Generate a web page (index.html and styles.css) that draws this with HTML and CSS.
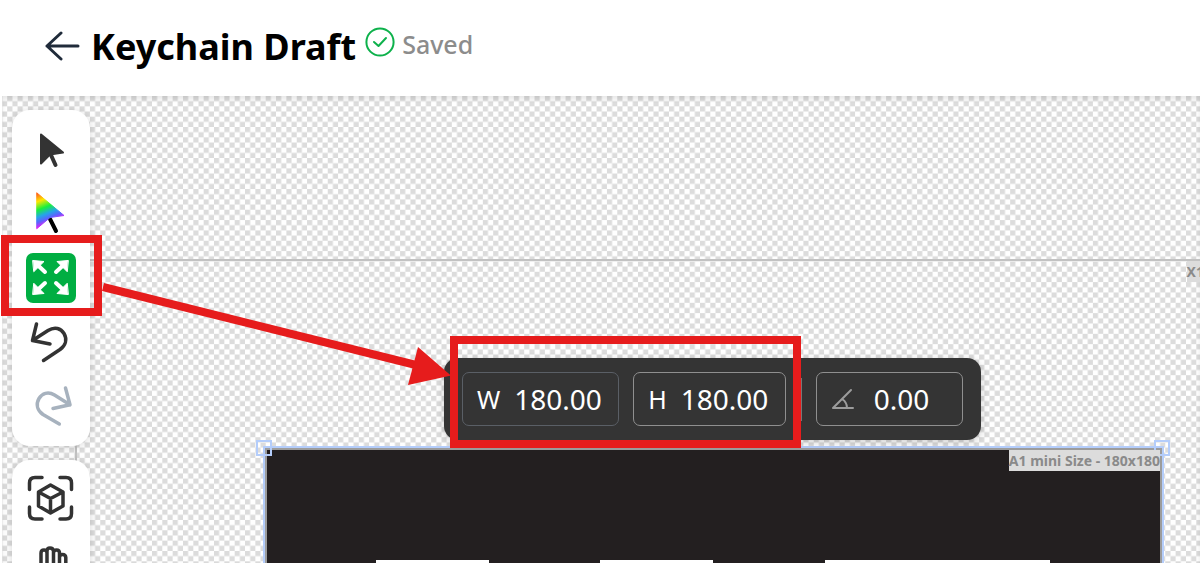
FILE: index.html
```html
<!DOCTYPE html>
<html lang="en">

<head>
	<meta charset="UTF-8">
	<meta name="viewport" content="width=device-width, initial-scale=1">
	<title>Keychain Draft</title>
	<link rel="stylesheet" href="styles.css">
</head>

<body>
	<header class="topbar">
		<a class="back" href="#" aria-label="Back">
			<svg width="36" height="32" viewBox="0 0 36 32"><path d="M33 15H2M16 2L2 15l14 13" /></svg>
		</a>
		<h1>Keychain Draft</h1>
		<div class="status">
			<svg width="30" height="30" viewBox="0 0 30 30"><circle cx="15" cy="15" r="13.6" /><path d="M9 15l4.500 4L21 11" /></svg>
			<span>Saved</span>
		</div>
	</header>

	<main class="workspace">
		<svg class="checker" width="100%" height="100%" aria-hidden="true">
			<defs>
				<pattern id="squares" width="2" height="2" patternUnits="userSpaceOnUse" patternTransform="translate(5.2 0) scale(5.17)">
					<path d="M0 0h1v1H0zM1 1h1v1H1z" fill="#dcdcdc" />
				</pattern>
			</defs>
			<rect width="100%" height="100%" fill="url(#squares)" />
		</svg>

		<!-- print areas -->
		<div class="plate"><span class="plate-label">X1</span></div>
		<div class="board">
			<i class="shape shape-a"></i>
			<i class="shape shape-b"></i>
			<i class="shape shape-c"></i>
			<i class="handle handle-left"></i>
			<i class="handle handle-right"></i>
			<span class="plate-label">A1 mini Size - 180x180</span>
		</div>

		<div class="tools">
			<nav class="tool-group" aria-label="Edit">
				<button type="button" aria-label="Select">
					<svg viewBox="0 0 50 50"><path class="solid" d="M15 9.500L37 27.500 24 29.500 15 38.500z" /><path class="thick" d="M24.500 29l5 11" /></svg>
				</button>
				<button type="button" aria-label="Select by color">
					<svg viewBox="0 0 50 50">
						<defs>
							<linearGradient id="rainbow" gradientUnits="userSpaceOnUse" x1="12" y1="5" x2="25" y2="37">
								<stop offset="0" stop-color="#ff6a1c" />
								<stop offset=".2" stop-color="#ffe600" />
								<stop offset=".43" stop-color="#18f03c" />
								<stop offset=".62" stop-color="#25a5e8" />
								<stop offset=".76" stop-color="#5b63ff" />
								<stop offset=".92" stop-color="#e51cf5" />
								<stop offset="1" stop-color="#ff22d8" />
							</linearGradient>
						</defs>
						<path d="M24 30l6 12" stroke="#000" stroke-width="4" />
						<path d="M11 4L38 26.500 24 28.500 11 39.500z" fill="url(#rainbow)" stroke="url(#rainbow)" stroke-width="1" />
					</svg>
				</button>
				<button type="button" class="active" aria-label="Resize">
					<svg viewBox="0 0 50 50">
						<g id="corner"><path d="M7 7.500l11 1L8 18.500z" fill="#fff" stroke="#fff" stroke-width="1" /><path d="M11 11.500l8 7.500" stroke="#fff" stroke-width="4" /></g>
						<use href="#corner" transform="matrix(-1 0 0 1 49 0)" />
						<use href="#corner" transform="matrix(1 0 0 -1 0 49)" />
						<use href="#corner" transform="matrix(-1 0 0 -1 49 49)" />
					</svg>
				</button>
				<button type="button" aria-label="Undo">
					<svg viewBox="0 0 50 50"><path d="M10.500 7L6.500 23.500 24 27M6.500 23.500L22 13.500C29 9 35 11.500 38 16.500c3.500 6 1.500 12-4 16L17.500 43.500" /></svg>
				</button>
				<button type="button" class="muted" aria-label="Redo">
					<svg viewBox="0 0 50 50"><path d="M39.500 7L44 23.800 27 27.500M44 23.800L28.500 14C22 10 16 12.500 13 17.500c-3.500 6-1.500 12 4 16l16.300 9.500" /></svg>
				</button>
			</nav>
			<nav class="tool-group" aria-label="View">
				<button type="button" aria-label="3D preview">
					<svg viewBox="0 0 50 50"><path d="M3.500 14.500V8q0-5.500 5.500-5.500h7M34 2.500h6q5.500 0 5.500 5.500v6.500M45.500 32v6.500q0 5.500-5.500 5.500h-6M16 44H9q-5.500 0-5.500-5.500V32" /><path d="M24.500 10L37 17v14l-12.500 7L12.500 31V17zM12.500 17l12 6.500L37 17M24.500 23.500v14" /></svg>
				</button>
				<button type="button" aria-label="Pan">
					<svg viewBox="0 0 50 50"><path d="M15 34V14q0-3 3-3t3 3v16M21 28V12q0-3 3-3t3.500 3v16M27.500 28V14q0-3 3-3t3 3v14M33.500 28V18.500q0-3 3-3t3.300 3V36" /></svg>
				</button>
			</nav>
		</div>

		<form class="props">
			<label class="field field-width"><span>W</span><input type="text" value="180.00"></label>
			<label class="field"><span>H</span><input type="text" value="180.00"></label>
			<i class="divider"></i>
			<label class="field field-angle" aria-label="Angle">
				<svg width="24" height="24" viewBox="0 0 24 24"><path d="M20 3L2 21h20M11 12q5 3 5 9" /></svg>
				<input type="text" value="0.00">
			</label>
		</form>
	</main>

	<!-- callouts -->
	<div class="callout callout-tool"></div>
	<div class="callout callout-size"></div>
	<svg class="callout-arrow" width="350" height="110" viewBox="0 0 350 110" aria-hidden="true">
		<path d="M3 7L320 86" stroke="#e61c1c" stroke-width="8" fill="none" />
		<path d="M318 67l33 28.500L308 105z" fill="#e61c1c" />
	</svg>
</body>

</html>
```

FILE: styles.css
```css
* {
	box-sizing: border-box;
}

body {
	margin: 0;
	height: 100vh;
	display: flex;
	flex-direction: column;
	position: relative;
	overflow: hidden;
	background: #fff;
	font-family: "Noto Sans", "Open Sans", sans-serif;
}

svg {
	display: block;
	fill: none;
	stroke-linecap: round;
	stroke-linejoin: round;
}

.topbar {
	flex: none;
	display: flex;
	align-items: center;
	height: 96px;
	padding: 0 45px 3px;
}

.back {
	margin-right: 10px;
}

.back svg {
	stroke: #202b3a;
	stroke-width: 3;
}

h1 {
	margin: 0;
	font-size: 36px;
	line-height: 48px;
	font-weight: 700;
	color: #000;
}

.status {
	display: flex;
	align-items: center;
	gap: 7px;
	margin-left: 9px;
	padding-bottom: 5px;
	font-size: 25px;
	line-height: 32px;
	font-weight: 500;
	color: #8c8c8c;
}

.status svg {
	margin-bottom: 4px;
	stroke: #0db14b;
	stroke-width: 2;
}

.workspace {
	flex: 1;
	min-height: 0;
	position: relative;
	overflow: hidden;
	margin-left: 2px;
	box-shadow: inset 0 3px 5px rgba(0, 0, 0, 0.1);
}

.checker {
	position: absolute;
	inset: 0;
	z-index: -1;
}

.plate {
	position: absolute;
	left: 73px;
	top: 163px;
	right: -6px;
	bottom: -8px;
	border: 2px solid #c2c2c2;
}

.plate-label {
	position: absolute;
	top: 0;
	right: 0;
	background: #dcdcdc;
	color: #8a8a8a;
	font-size: 14px;
	line-height: 21px;
	font-weight: 700;
	white-space: nowrap;
}

.board {
	position: absolute;
	left: 263px;
	top: 352px;
	right: 38px;
	bottom: -8px;
	border: 2px solid #9c9c9c;
	outline: 2px solid #b4cdfb;
	background: #231f20;
}

.shape {
	position: absolute;
	top: 110px;
	height: 20px;
	background: #fff;
}

.shape-a {
	left: 109px;
	width: 113px;
}

.shape-b {
	left: 333px;
	width: 113px;
}

.shape-c {
	left: 558px;
	width: 225px;
}

.handle {
	position: absolute;
	top: -10px;
	width: 16px;
	height: 16px;
	border: 2px solid #b4cdfb;
}

.handle-left {
	left: -11px;
}

.handle-right {
	right: -10px;
}

.tools {
	position: relative;
	display: flex;
	flex-direction: column;
	align-items: flex-start;
	gap: 14px;
	padding: 14px 10px;
}

.tool-group {
	display: flex;
	flex-direction: column;
	gap: 14px;
	padding: 15px 14px;
	border-radius: 18px;
	background: #fff;
	box-shadow: 0 1px 8px rgba(0, 0, 0, 0.16);
}

.tool-group button {
	width: 50px;
	height: 50px;
	padding: 0;
	border: 0;
	border-radius: 7px;
	background: none;
	color: #333;
}

.tool-group svg {
	width: 50px;
	height: 50px;
	stroke: currentColor;
	stroke-width: 3.5;
}

.tool-group .solid {
	fill: currentColor;
	stroke-width: 2;
}

.tool-group .thick {
	stroke-width: 4;
}

.tool-group .active {
	background: #00ae42;
}

.tool-group .muted {
	color: #a7b2be;
}

.props {
	position: absolute;
	left: 442px;
	top: 262px;
	display: flex;
	align-items: center;
	gap: 14px;
	padding: 14px 18px;
	border-radius: 14px;
	background: #343434;
	box-shadow: 0 2px 8px rgba(0, 0, 0, 0.2);
}

.field {
	display: flex;
	align-items: center;
	gap: 14px;
	height: 54px;
	padding: 0 14px;
	border: 1px solid #8f8f8f;
	border-radius: 7px;
	color: #fff;
	font-size: 25px;
}

.field-width {
	border-color: #5a5f66;
}

.field input {
	width: 90px;
	height: 40px;
	padding: 0;
	border: 0;
	outline: 0;
	background: none;
	color: inherit;
	font: inherit;
	font-size: 28px;
}

.field-angle {
	gap: 19px;
}

.field-angle input {
	width: 74px;
}

.field svg {
	stroke: #9c9c9c;
	stroke-width: 2;
}

.divider {
	width: 2px;
	height: 43px;
	background: #777;
}

.callout {
	position: absolute;
	border: 8px solid #e61c1c;
}

.callout-tool {
	left: 1px;
	top: 235px;
	width: 101px;
	height: 81px;
}

.callout-size {
	left: 450px;
	top: 336px;
	width: 351px;
	height: 112px;
}

.callout-arrow {
	position: absolute;
	left: 100px;
	top: 280px;
	stroke-linecap: butt;
}
```
